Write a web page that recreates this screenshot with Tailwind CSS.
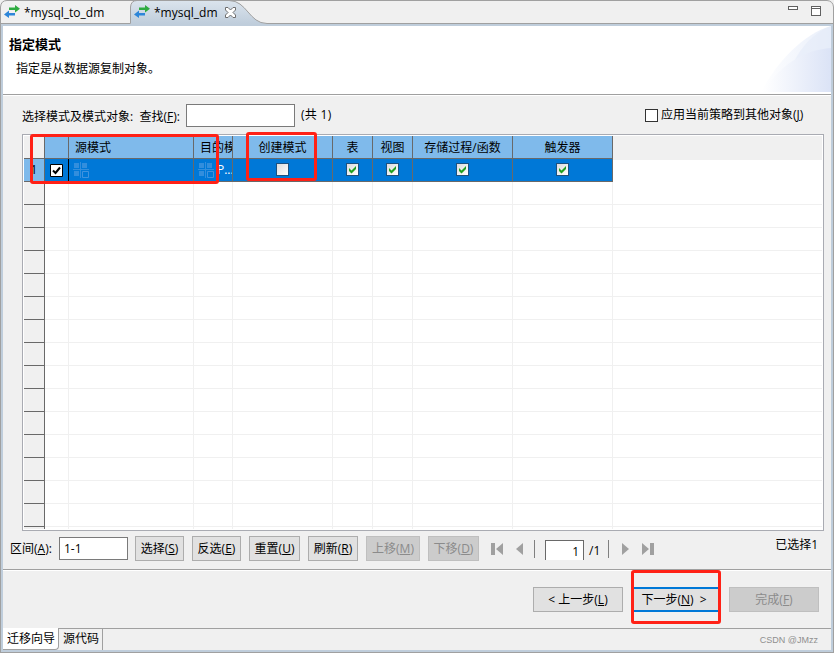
<!DOCTYPE html>
<html lang="zh-CN">
<head>
  <meta charset="UTF-8" />
  <meta name="viewport" content="width=device-width, initial-scale=1.0" />
  <title>迁移向导</title>
  <script src="https://cdn.jsdelivr.net/npm/@tailwindcss/browser@4"></script>
</head>
<body class="bg-[#f0f0f0] text-black text-[12px] leading-4 font-['Open_Sans','Noto_Sans_CJK_SC',sans-serif]">
  <div class="relative w-[834px] h-[653px] overflow-hidden flex flex-col">

    <!-- Editor tabs -->
    <div class="relative h-6 shrink-0 flex text-[12px]">
      <svg class="absolute inset-0" width="834" height="24" viewBox="0 0 834 24" fill="none">
        <defs>
          <linearGradient id="tab" x1="0" y1="0" x2="0" y2="1">
            <stop offset="0" stop-color="#dbe4ed" />
            <stop offset="1" stop-color="#bfcddb" />
          </linearGradient>
        </defs>
        <path d="M130.500 24V7Q131 0.500 137 0.500H229C247 0.500 249 23.500 267 23.500V24Z" fill="url(#tab)" />
        <path d="M0.500 24V7Q1 0.500 7 0.500H827Q833 1 833.500 7V24" stroke="#a0a0a0" />
        <path d="M1 23.500H130.500V7Q131 0.500 137 0.500H229C247 0.500 249 23.500 267 23.500H833" stroke="#a0a0a0" />
      </svg>
      <div class="relative w-[130px] pl-1 flex items-center">
        <svg class="w-4 h-4" viewBox="0 0 16 16">
          <path d="M5 3.500h6V1L16 4.800L11 8.500V6H5Z" fill="#2eab40" />
          <path d="M11 9H5V6.500L0 10.500L5 14V11.500H11Z" fill="#2d86d9" />
        </svg>
        <span class="ml-1 mt-px whitespace-nowrap">*mysql_to_dm</span>
      </div>
      <div class="relative w-[130px] pl-1 flex items-center">
        <svg class="w-4 h-4" viewBox="0 0 16 16">
          <path d="M5 3.500h6V1L16 4.800L11 8.500V6H5Z" fill="#2eab40" />
          <path d="M11 9H5V6.500L0 10.500L5 14V11.500H11Z" fill="#2d86d9" />
        </svg>
        <span class="ml-1 mt-px w-[63px] whitespace-nowrap">*mysql_dm</span>
        <svg class="ml-2 w-[11px] h-[11px]" viewBox="0 0 11 11">
          <path d="M0.500 0.500H3L5.500 3L8 0.500H10.500V3L8 5.500L10.500 8V10.500H8L5.500 8L3 10.500H0.500V8L3 5.500L0.500 3Z" fill="#fff" stroke="#6e6e6e" />
        </svg>
      </div>
      <div class="relative ml-auto mr-[13px] mt-1.5 flex gap-[13px] items-start">
        <div class="w-[10px] h-1 border border-[#606060] bg-white"></div>
        <div class="w-[10px] h-[10px] border border-[#606060] bg-white"><div class="mt-px h-px bg-[#606060]"></div></div>
      </div>
    </div>

    <!-- Editor frame -->
    <div class="flex-1 min-h-0 border-x border-b border-[#a0a0a0] bg-[#bfcddb] pt-0.5 px-0.5 pb-0.5 flex flex-col">
      <!-- Wizard title -->
      <div class="relative h-[69px] shrink-0 bg-white border-b border-[#a0a0a0]">
        <svg class="absolute right-0 top-0" width="70" height="66" viewBox="0 0 70 66">
          <defs>
            <linearGradient id="arc1"><stop offset="0" stop-color="#fff" /><stop offset="1" stop-color="#e8eefa" /></linearGradient>
            <linearGradient id="arc2"><stop offset="0" stop-color="#fff" /><stop offset="1" stop-color="#dbe3f6" /></linearGradient>
          </defs>
          <path d="M0 66C16 36 42 8 70 0V66Z" fill="url(#arc1)" />
          <path d="M32 38C40 20 54 6 70 0V24C56 25 43 30 32 38Z" fill="#e4ebf9" opacity=".6" />
          <path d="M2 66C18 40 42 24 70 22V66Z" fill="url(#arc2)" />
        </svg>
        <h1 class="pt-[10px] pl-1.5 text-[13px] leading-4 font-bold">指定模式</h1>
        <p class="mt-[9px] pl-[13px]">指定是从数据源复制对象。</p>
      </div>

      <div class="relative flex-1 min-h-0 bg-[#f0f0f0] border-t border-white flex flex-col">
        <!-- Search bar -->
        <div class="h-[38px] shrink-0 pl-[19px] pr-[24px] flex items-center whitespace-nowrap">
          <label class="w-[164px] pt-1">选择模式及模式对象:&nbsp; 查找(<u>F</u>):</label>
          <div class="w-[109px] h-[23px] bg-white border border-[#7a7a7a]"></div>
          <span class="ml-1.5 tracking-[.3px]">(共 1)</span>
          <div class="ml-auto w-[13px] h-[13px] bg-white border border-[#333]"></div>
          <span class="ml-[3px] w-[146px]">应用当前策略到其他对象(<u>J</u>)</span>
        </div>

        <!-- Grid -->
        <div class="ml-[19px] w-[802px] h-[397px] shrink-0 bg-white border border-[#a9abb2] p-px overflow-hidden">
          <div class="relative">
            <div class="absolute right-0 top-0 w-[209px] h-6 bg-[#f0f0f0]"></div>
            <div class="relative flex w-[589px] h-[23px] text-center whitespace-nowrap *:border-r *:border-b *:border-[#696969] *:bg-[#7fbaeb] *:leading-[24px] *:overflow-hidden">
              <div class="w-[21px] !bg-[#f0f0f0]"></div>
              <div class="w-6"></div>
              <div class="w-[125px] pl-1.5 text-left">源模式</div>
              <div class="w-[39px] pl-1.5 text-left">目的模式</div>
              <div class="w-[100px]">创建模式</div>
              <div class="w-10">表</div>
              <div class="w-10">视图</div>
              <div class="w-[100px]">存储过程/函数</div>
              <div class="w-[100px]">触发器</div>
            </div>
            <div class="relative flex w-[589px] h-[23px] *:flex *:items-center *:border-r *:border-b *:border-[#696969] *:bg-[#0078d7]">
              <div class="w-[21px] justify-center !bg-[#7fbaeb]">1</div>
              <div class="w-6 justify-center !border-black">
                <svg width="13" height="13" viewBox="0 0 13 13"><path d="M.5 .5H12.500V12.500H.5Z" fill="#fff" stroke="#000" /><path d="M3 6.500L5.500 9L10 3.500" fill="none" stroke="#000" stroke-width="2" /></svg>
              </div>
              <div class="w-[125px] pl-1">
                <svg width="16" height="16" viewBox="0 0 16 16" fill="#3f93df"><path d="M1 1h5v5H1zM9 1h5v5H9zM1 9h5v5H1zM7 0h1v16H7zM0 7h16v1H0z" opacity=".8" /><path d="M9.500 9.500h6v6h-6z" fill="none" stroke="#3f93df" /></svg>
              </div>
              <div class="w-[39px] pl-1 overflow-hidden text-white">
                <svg class="shrink-0" width="16" height="16" viewBox="0 0 16 16" fill="#3f93df"><path d="M1 1h5v5H1zM9 1h5v5H9zM1 9h5v5H1zM7 0h1v16H7zM0 7h16v1H0z" opacity=".8" /><path d="M9.500 9.500h6v6h-6z" fill="none" stroke="#3f93df" /></svg>
                <span class="ml-[3px]">P...</span>
              </div>
              <div class="w-[100px] justify-center"><div class="w-[13px] h-[13px] -mt-px border border-[#1c5180] bg-linear-to-br from-[#dcdcdc] to-white"></div></div>
              <div class="w-10 justify-center"><div class="w-[13px] h-[13px] -mt-px border border-[#1c5180] bg-linear-to-br from-[#dcdcdc] to-white"><svg width="11" height="11" viewBox="0 0 11 11"><path d="M2 4V7L4.500 9.500L9 5V2L4.500 6.500Z" fill="#21a121" /></svg></div></div>
              <div class="w-10 justify-center"><div class="w-[13px] h-[13px] -mt-px border border-[#1c5180] bg-linear-to-br from-[#dcdcdc] to-white"><svg width="11" height="11" viewBox="0 0 11 11"><path d="M2 4V7L4.500 9.500L9 5V2L4.500 6.500Z" fill="#21a121" /></svg></div></div>
              <div class="w-[100px] justify-center"><div class="w-[13px] h-[13px] -mt-px border border-[#1c5180] bg-linear-to-br from-[#dcdcdc] to-white"><svg width="11" height="11" viewBox="0 0 11 11"><path d="M2 4V7L4.500 9.500L9 5V2L4.500 6.500Z" fill="#21a121" /></svg></div></div>
              <div class="w-[100px] justify-center"><div class="w-[13px] h-[13px] -mt-px border border-[#1c5180] bg-linear-to-br from-[#dcdcdc] to-white"><svg width="11" height="11" viewBox="0 0 11 11"><path d="M2 4V7L4.500 9.500L9 5V2L4.500 6.500Z" fill="#21a121" /></svg></div></div>
            </div>
            <div id="emptyRows">
              <!-- Rows inserted by JS -->
            </div>
          </div>
        </div>

        <!-- Range and paging -->
        <div class="h-[38px] shrink-0 pb-[3px] pl-[7px] pr-[13px] flex items-center whitespace-nowrap *:shrink-0">
          <label class="w-[49px]">区间(<u>A</u>):</label>
          <div class="w-[69px] h-[23px] pl-1 leading-[21px] bg-white border border-[#7a7a7a]">1-1</div>
          <button class="ml-[7px] w-[49px] h-[25px] bg-[#e1e1e1] border border-[#adadad]">选择(<u>S</u>)</button>
          <button class="ml-2 w-[49px] h-[25px] bg-[#e1e1e1] border border-[#adadad]">反选(<u>E</u>)</button>
          <button class="ml-2 w-[51px] h-[25px] bg-[#e1e1e1] border border-[#adadad]">重置(<u>U</u>)</button>
          <button class="ml-2 w-[50px] h-[25px] bg-[#e1e1e1] border border-[#adadad]">刷新(<u>R</u>)</button>
          <button class="ml-2 w-[54px] h-[25px] bg-[#ccc] border border-[#bfbfbf] text-[#8b8b8b]">上移(<u>M</u>)</button>
          <button class="ml-2 w-[51px] h-[25px] bg-[#ccc] border border-[#bfbfbf] text-[#8b8b8b]">下移(<u>D</u>)</button>
          <svg class="ml-3 w-3 h-3" viewBox="0 0 12 12" fill="#a0a0a0"><path d="M0 0h4v12H0zM12 0v12L5 6z" /></svg>
          <svg class="ml-[13px] w-[7px] h-3" viewBox="0 0 7 12" fill="#a0a0a0"><path d="M7 0v12L0 6z" /></svg>
          <div class="ml-[11px] w-px h-[18px] bg-[#808080]"></div>
          <div class="ml-[10px] mt-[2px] w-[39px] h-5 pr-1 text-right leading-[22px] bg-white border border-b-0 border-[#696969]">1</div>
          <span class="ml-[5px] mt-1 w-[11px]">/1</span>
          <div class="ml-2 w-px h-[18px] bg-[#808080]"></div>
          <svg class="ml-[13px] w-[7px] h-3" viewBox="0 0 7 12" fill="#a0a0a0"><path d="M0 0v12L7 6z" /></svg>
          <svg class="ml-[13px] w-3 h-3" viewBox="0 0 12 12" fill="#a0a0a0"><path d="M8 0h4v12H8zM0 0v12L7 6z" /></svg>
          <span class="ml-auto -mt-2">已选择1</span>
        </div>

        <!-- Wizard buttons -->
        <div class="h-[59px] shrink-0 border-t border-[#a0a0a0] shadow-[inset_0_1px_#fff] pt-[17px] pr-3 flex justify-end gap-2">
          <button class="w-[90px] h-[25px] bg-[#e1e1e1] border border-[#adadad] pt-px">&lt; 上一步(<u>L</u>)</button>
          <button class="w-[90px] h-[25px] bg-[#e1e1e1] border-2 border-[#0078d7] pt-px pr-1">下一步(<u>N</u>)&nbsp; &gt;</button>
          <button class="w-[90px] h-[25px] bg-[#ccc] border border-[#bfbfbf] text-[#8b8b8b] pt-px">完成(<u>F</u>)</button>
        </div>

        <!-- Page tabs -->
        <div class="h-[22px] shrink-0 border-t border-[#a0a0a0] flex whitespace-nowrap">
          <div class="w-[56px] -mt-px bg-white border-r border-b border-[#a0a0a0] rounded-br-sm pl-1 leading-[21px]">迁移向导</div>
          <div class="w-11 border-r border-[#a0a0a0] pl-1 leading-5">源代码</div>
          <span class="ml-auto pr-[13px] text-[9px] leading-[22px] text-[#8f8f8f] font-['Liberation_Sans',sans-serif]">CSDN @JMzz</span>
        </div>
      </div>
    </div>

    <!-- Highlights -->
    <div class="absolute left-[30px] top-[134px] w-[189px] h-[50px] border-[3px] border-[#ff2116] rounded-[3px]"></div>
    <div class="absolute left-[246px] top-[132px] w-[71px] h-[49px] border-[3px] border-[#ff2116] rounded-[3px]"></div>
    <div class="absolute left-[631px] top-[570px] w-[90px] h-[54px] border-[3px] border-[#ff2116] rounded-[3px]"></div>
  </div>

  <script>
    const emptyRows = document.getElementById("emptyRows");
    for (let i = 0; i < 15; i++) {
      const row = document.createElement("div");
      row.className = "flex h-[23px]";
      row.innerHTML = `
        <div class="w-[21px] bg-[#f0f0f0] border-r border-b border-[#696969]"></div>
        <div class="w-6 border-r border-b border-[#f0f0f0]"></div>
        <div class="w-[125px] border-r border-b border-[#f0f0f0]"></div>
        <div class="w-[39px] border-r border-b border-[#f0f0f0]"></div>
        <div class="w-[100px] border-r border-b border-[#f0f0f0]"></div>
        <div class="w-10 border-r border-b border-[#f0f0f0]"></div>
        <div class="w-10 border-r border-b border-[#f0f0f0]"></div>
        <div class="w-[100px] border-r border-b border-[#f0f0f0]"></div>
        <div class="w-[100px] border-r border-b border-[#f0f0f0]"></div>
        <div class="flex-1 border-b border-[#f0f0f0]"></div>
      `;
      emptyRows.appendChild(row);
    }
    // last row is cut off by the bottom edge of the grid
    const rest = emptyRows.lastElementChild.cloneNode(true);
    rest.className = "flex h-[2px]";
    [...rest.children].forEach((cell) => cell.classList.remove("border-b"));
    emptyRows.appendChild(rest);
  </script>
</body>
</html>
